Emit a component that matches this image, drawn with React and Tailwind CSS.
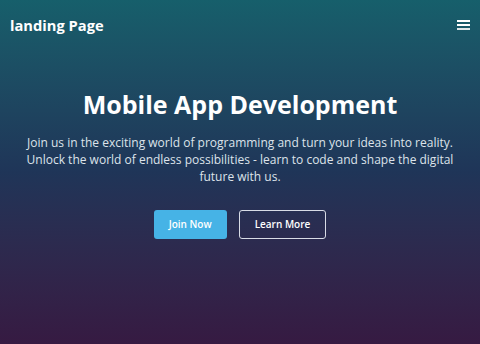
import React from 'react';

const App = () => {
  return (
    <div
      className="w-[480px] h-[344px] flex flex-col bg-gradient-to-b from-[#165f6b] via-[#1f3558] to-[#361a42] text-white"
      style={{ fontFamily: '"Open Sans", sans-serif' }}
    >
      {/* Navbar */}
      <nav className="flex items-center justify-between h-[50px] pl-[10px] pr-[10px]">
        <span className="text-[14.7px] font-bold">landing Page</span>
        <button className="flex flex-col gap-[2px] w-[13px]">
          <span className="h-[2px] w-full bg-white" />
          <span className="h-[2px] w-full bg-white" />
          <span className="h-[2px] w-full bg-[#dfe6e8]" />
        </button>
      </nav>

      {/* Hero */}
      <section className="flex flex-col items-center text-center pt-[38px] px-[20px]">
        <h1 className="text-[25px] font-bold leading-[32px]">Mobile App Development</h1>
        <p className="mt-[14px] text-[12px] leading-[17px] text-[#dde3ea]">
          Join us in the exciting world of programming and turn your ideas into reality.
          <br />
          Unlock the world of endless possibilities - learn to code and shape the digital
          <br />
          future with us.
        </p>
        <div className="flex gap-[12px] mt-[25px]">
          <button className="h-[29px] px-[15px] rounded-[3px] bg-[#46b3e6] text-[10px] font-semibold">
            Join Now
          </button>
          <button className="h-[29px] px-[15px] rounded-[3px] border border-[#d8dce6] text-[10px] font-semibold">
            Learn More
          </button>
        </div>
      </section>
    </div>
  );
};

export default App;
